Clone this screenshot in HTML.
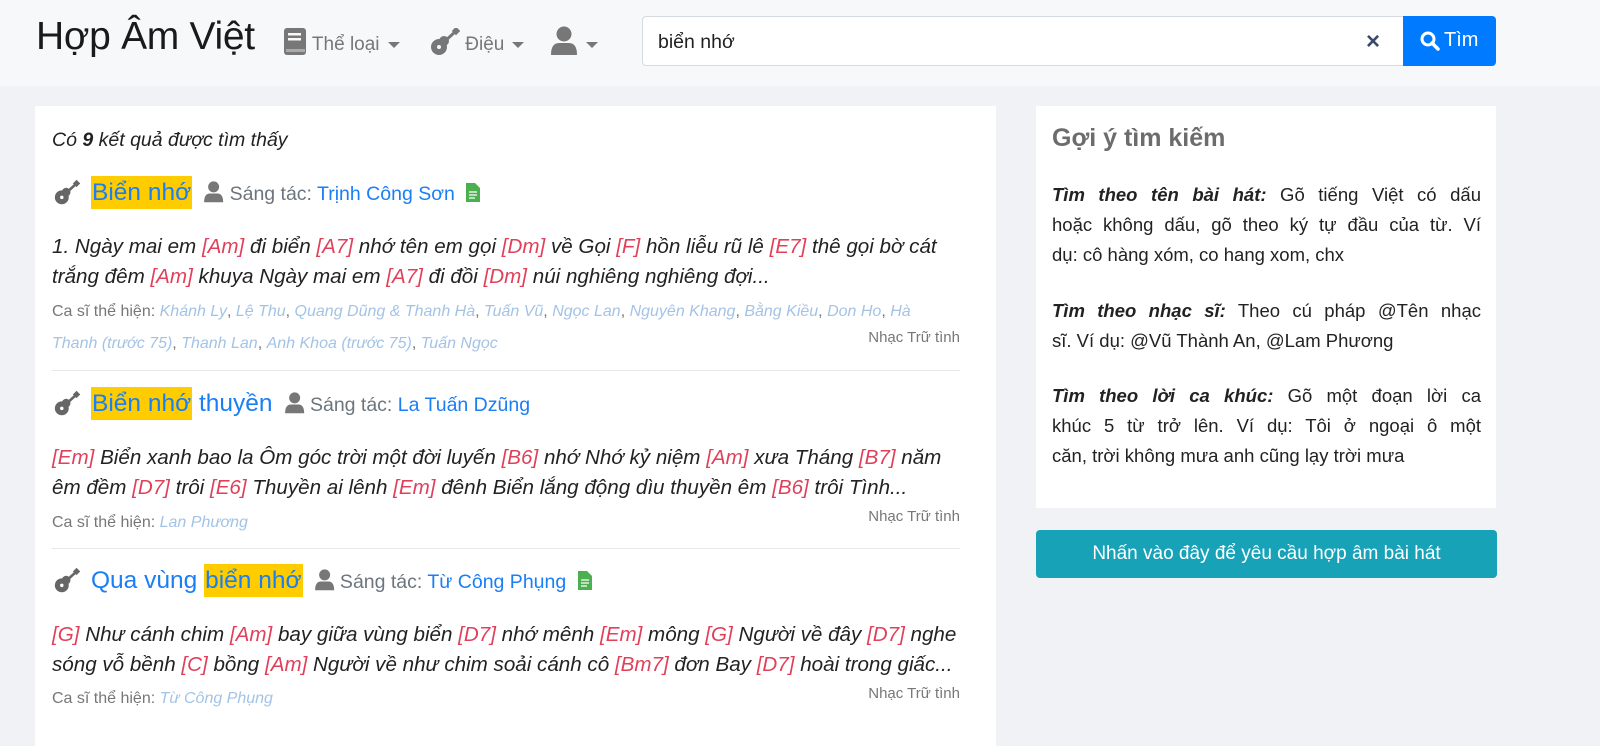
<!DOCTYPE html>
<html><head><meta charset="utf-8">
<style>
*{box-sizing:border-box;margin:0;padding:0}
body{width:1600px;height:735px;overflow:hidden;background:#f0f2f6;font-family:"Liberation Sans",sans-serif;color:#212529;position:relative}
.hdr{position:absolute;left:0;top:0;width:1600px;height:86px;background:#f7f8fa}
.abs{position:absolute;white-space:nowrap}
.logo{left:36px;top:15px;font-size:39px;color:#1a1a1a;letter-spacing:-0.3px}
.nav{font-size:19px;color:#777}
.caret{display:inline-block;width:0;height:0;border-left:6px solid transparent;border-right:6px solid transparent;border-top:6px solid #777;vertical-align:middle;margin-left:8px}
.search{left:642px;top:16px;width:762px;height:50px;background:#fff;border:1px solid #d5dae0;border-right:none;border-radius:4px 0 0 4px}
.btn{left:1403px;top:16px;width:93px;height:50px;background:#007bff;border-radius:0 4px 4px 0;color:#fff;font-size:20px}
.card{position:absolute;background:#fff}
.row{position:absolute;left:54px;white-space:nowrap;display:flex;align-items:center}
.title{font-size:24.5px;color:#1a7ef5;margin-left:11px}
.hl{background:#ffcc00;padding:3px 1px}
.by{font-size:19.5px;color:#6c757d;margin-left:12px}
.by a{color:#1a7ef5;text-decoration:none}
.ly{font-size:20.6px;font-style:italic;color:#222;line-height:30px}
.c{color:#e0405a}
.sg{font-size:16px;color:#777}
.sg i{color:#a3c3e6}
.cat{font-size:15px;color:#777}
.hr{position:absolute;left:52px;width:908px;height:1px;background:#e6e8eb}
.rp{font-size:18.5px;color:#222;line-height:30px;position:absolute;left:1052px;width:429px}
.rp div{text-align:justify;text-align-last:justify;white-space:nowrap}
.rp div.l{text-align-last:left}
</style></head><body>
<div class="hdr"></div>
<div class="abs logo">Hợp Âm Việt</div>
<div class="abs nav" style="left:284px;top:28px">
<svg width="23" height="28" viewBox="0 0 23 28" style="vertical-align:-6px"><rect x="0" y="0" width="22" height="27" rx="3" fill="#777"/><rect x="4" y="5" width="13" height="2.5" fill="#f7f8fa"/><rect x="4" y="10" width="13" height="2.5" fill="#f7f8fa"/><rect x="2" y="21" width="19" height="3" fill="#aaa"/></svg> Thể loại<span class="caret"></span></div>
<div class="abs nav" style="left:430px;top:28px">
<svg width="30" height="28" viewBox="0 0 30 28" style="vertical-align:-6px"><circle cx="9" cy="19" r="8" fill="#777"/><circle cx="14" cy="13" r="5" fill="#777"/><path d="M14 14 L26 3" stroke="#777" stroke-width="3"/><rect x="23" y="0" width="6" height="6" fill="#777" transform="rotate(45 26 3)"/><circle cx="9" cy="19" r="2" fill="#f7f8fa"/></svg> Điệu<span class="caret"></span></div>
<div class="abs nav" style="left:551px;top:26px">
<svg width="27" height="30" viewBox="0 0 27 30" style="vertical-align:-6px"><circle cx="13" cy="8" r="7.5" fill="#777"/><path d="M0 29 Q0 17 8 17 L18 17 Q26 17 26 29Z" fill="#777"/></svg><span class="caret"></span></div>
<div class="abs search"></div>
<div class="abs" style="left:658px;top:31px;font-size:19.5px;color:#222">biển nhớ</div>
<div class="abs" style="left:1366px;top:28px;font-size:24px;color:#3a4a6b;font-weight:bold">×</div>
<div class="abs btn"><svg width="20" height="20" viewBox="0 0 20 20" style="position:absolute;left:17px;top:15px"><circle cx="8" cy="8" r="6" fill="none" stroke="#fff" stroke-width="3"/><path d="M12 12 L18 18" stroke="#fff" stroke-width="3.5" stroke-linecap="round"/></svg><span style="position:absolute;left:41px;top:13px">Tìm</span></div>

<div class="card" style="left:35px;top:106px;width:961px;height:640px"></div>
<div class="abs" style="left:52px;top:129px;font-size:19.5px;font-style:italic;color:#222">Có <b>9</b> kết quả được tìm thấy</div>

<!-- result 1 -->
<div class="row" style="top:176px;height:34px">
<svg width="26" height="26" viewBox="0 0 30 28"><circle cx="9" cy="19" r="8" fill="#666"/><circle cx="14" cy="13" r="5" fill="#666"/><path d="M14 14 L26 3" stroke="#666" stroke-width="3"/><rect x="23" y="0" width="6" height="6" fill="#666" transform="rotate(45 26 3)"/><circle cx="9" cy="19" r="2" fill="#fff"/></svg>
<span class="title"><span class="hl">Biển nhớ</span></span>
<span class="by"><svg width="20" height="22" viewBox="0 0 27 30" style="vertical-align:-3px"><circle cx="13" cy="8" r="7.5" fill="#777"/><path d="M0 29 Q0 17 8 17 L18 17 Q26 17 26 29Z" fill="#777"/></svg> Sáng tác: <a>Trịnh Công Sơn</a> <svg width="14" height="19" viewBox="0 0 14 19" style="vertical-align:-2px;margin-left:6px"><path d="M0 0 H9 L14 5 V19 H0Z" fill="#4caf50"/><path d="M3 9H11M3 12H11M3 15H9" stroke="#fff" stroke-width="1.3"/></svg></span></div>
<div class="abs ly" style="left:52px;top:232px">1. Ngày mai em <span class="c">[Am]</span> đi biển <span class="c">[A7]</span> nhớ tên em gọi <span class="c">[Dm]</span> về Gọi <span class="c">[F]</span> hồn liễu rũ lê <span class="c">[E7]</span> thê gọi bờ cát<br>trắng đêm <span class="c">[Am]</span> khuya Ngày mai em <span class="c">[A7]</span> đi đồi <span class="c">[Dm]</span> núi nghiêng nghiêng đợi...</div>
<div class="abs sg" style="left:52px;top:303px">Ca sĩ thể hiện: <i>Khánh Ly</i>, <i>Lệ Thu</i>, <i>Quang Dũng &amp; Thanh Hà</i>, <i>Tuấn Vũ</i>, <i>Ngọc Lan</i>, <i>Nguyên Khang</i>, <i>Bằng Kiều</i>, <i>Don Ho</i>, <i>Hà</i></div>
<div class="abs sg" style="left:52px;top:335px"><i>Thanh (trước 75)</i>, <i>Thanh Lan</i>, <i>Anh Khoa (trước 75)</i>, <i>Tuấn Ngọc</i></div>
<div class="abs cat" style="right:640px;top:329px">Nhạc Trữ tình</div>
<div class="hr" style="top:370px"></div>

<!-- result 2 -->
<div class="row" style="top:387px;height:34px">
<svg width="26" height="26" viewBox="0 0 30 28"><circle cx="9" cy="19" r="8" fill="#666"/><circle cx="14" cy="13" r="5" fill="#666"/><path d="M14 14 L26 3" stroke="#666" stroke-width="3"/><rect x="23" y="0" width="6" height="6" fill="#666" transform="rotate(45 26 3)"/><circle cx="9" cy="19" r="2" fill="#fff"/></svg>
<span class="title"><span class="hl">Biển nhớ</span> thuyền</span>
<span class="by"><svg width="20" height="22" viewBox="0 0 27 30" style="vertical-align:-3px"><circle cx="13" cy="8" r="7.5" fill="#777"/><path d="M0 29 Q0 17 8 17 L18 17 Q26 17 26 29Z" fill="#777"/></svg> Sáng tác: <a>La Tuấn Dzũng</a></span></div>
<div class="abs ly" style="left:52px;top:443px"><span class="c">[Em]</span> Biển xanh bao la Ôm góc trời một đời luyến <span class="c">[B6]</span> nhớ Nhớ kỷ niệm <span class="c">[Am]</span> xưa Tháng <span class="c">[B7]</span> năm<br>êm đềm <span class="c">[D7]</span> trôi <span class="c">[E6]</span> Thuyền ai lênh <span class="c">[Em]</span> đênh Biển lắng động dìu thuyền êm <span class="c">[B6]</span> trôi Tình...</div>
<div class="abs sg" style="left:52px;top:514px">Ca sĩ thể hiện: <i>Lan Phương</i></div>
<div class="abs cat" style="right:640px;top:508px">Nhạc Trữ tình</div>
<div class="hr" style="top:548px"></div>

<!-- result 3 -->
<div class="row" style="top:564px;height:34px">
<svg width="26" height="26" viewBox="0 0 30 28"><circle cx="9" cy="19" r="8" fill="#666"/><circle cx="14" cy="13" r="5" fill="#666"/><path d="M14 14 L26 3" stroke="#666" stroke-width="3"/><rect x="23" y="0" width="6" height="6" fill="#666" transform="rotate(45 26 3)"/><circle cx="9" cy="19" r="2" fill="#fff"/></svg>
<span class="title">Qua vùng <span class="hl">biển nhớ</span></span>
<span class="by"><svg width="20" height="22" viewBox="0 0 27 30" style="vertical-align:-3px"><circle cx="13" cy="8" r="7.5" fill="#777"/><path d="M0 29 Q0 17 8 17 L18 17 Q26 17 26 29Z" fill="#777"/></svg> Sáng tác: <a>Từ Công Phụng</a> <svg width="14" height="19" viewBox="0 0 14 19" style="vertical-align:-2px;margin-left:6px"><path d="M0 0 H9 L14 5 V19 H0Z" fill="#4caf50"/><path d="M3 9H11M3 12H11M3 15H9" stroke="#fff" stroke-width="1.3"/></svg></span></div>
<div class="abs ly" style="left:52px;top:620px"><span class="c">[G]</span> Như cánh chim <span class="c">[Am]</span> bay giữa vùng biển <span class="c">[D7]</span> nhớ mênh <span class="c">[Em]</span> mông <span class="c">[G]</span> Người về đây <span class="c">[D7]</span> nghe<br>sóng vỗ bềnh <span class="c">[C]</span> bồng <span class="c">[Am]</span> Người về như chim soải cánh cô <span class="c">[Bm7]</span> đơn Bay <span class="c">[D7]</span> hoài trong giấc...</div>
<div class="abs sg" style="left:52px;top:690px">Ca sĩ thể hiện: <i>Từ Công Phụng</i></div>
<div class="abs cat" style="right:640px;top:685px">Nhạc Trữ tình</div>

<!-- right -->
<div class="card" style="left:1036px;top:106px;width:460px;height:402px"></div>
<div class="abs" style="left:1052px;top:124px;font-size:25px;font-weight:bold;color:#6c6c6c">Gợi ý tìm kiếm</div>
<div class="rp" style="top:180px"><div><b><i>Tìm theo tên bài hát:</i></b> Gõ tiếng Việt có dấu</div><div>hoặc không dấu, gõ theo ký tự đầu của từ. Ví</div><div class="l">dụ: cô hàng xóm, co hang xom, chx</div></div>
<div class="rp" style="top:296px"><div><b><i>Tìm theo nhạc sĩ:</i></b> Theo cú pháp @Tên nhạc</div><div class="l">sĩ. Ví dụ: @Vũ Thành An, @Lam Phương</div></div>
<div class="rp" style="top:381px"><div><b><i>Tìm theo lời ca khúc:</i></b> Gõ một đoạn lời ca</div><div>khúc 5 từ trở lên. Ví dụ: Tôi ở ngoại ô một</div><div class="l">căn, trời không mưa anh cũng lạy trời mưa</div></div>
<div class="abs" style="left:1036px;top:530px;width:461px;height:48px;background:#17a2b8;border-radius:4px;color:#fff;font-size:19px;text-align:center;line-height:48px">Nhấn vào đây để yêu cầu hợp âm bài hát</div>
</body></html>
